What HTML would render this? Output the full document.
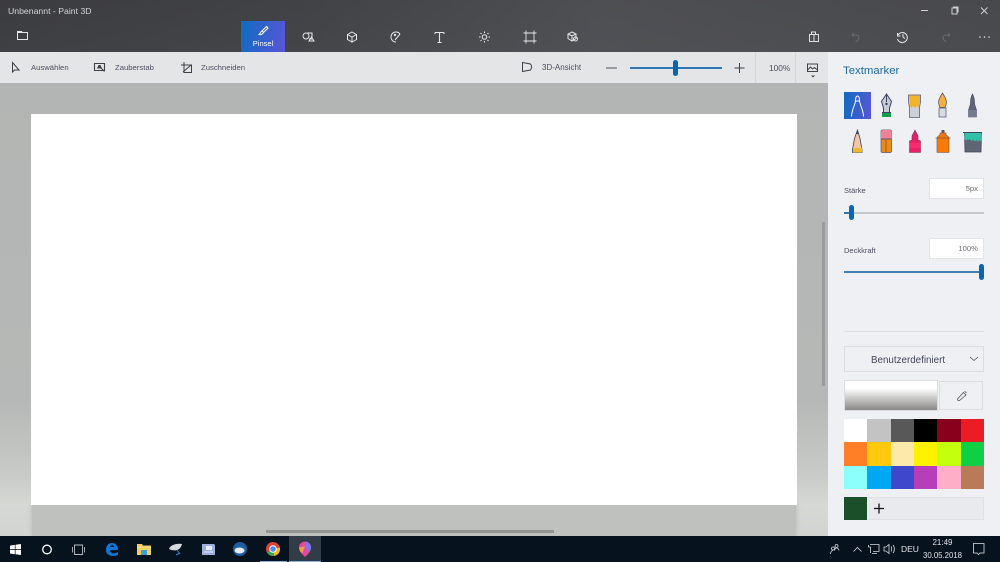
<!DOCTYPE html>
<html><head><meta charset="utf-8">
<style>
html,body{margin:0;padding:0;width:1000px;height:562px;overflow:hidden;background:#b8bab9;font-family:"Liberation Sans","DejaVu Sans",sans-serif}
#w{position:absolute;left:0;top:0;width:1000px;height:562px;overflow:hidden;filter:blur(.3px)}
.a{position:absolute}
svg{position:absolute;overflow:visible}
.t{position:absolute;white-space:nowrap;font-size:7.7px;color:#4c4e62;line-height:10px}
</style></head><body><div id="w">
<div class="a" style="left:0;top:0;width:1000px;height:52px;background:linear-gradient(90deg,#3b3c40 0,#434448 30%,#54555a 60%,#4c4d51 100%)"></div>
<div class="a" style="left:0;top:0;width:1000px;height:52px;background:linear-gradient(180deg,rgba(60,60,62,.25),rgba(70,72,76,.3))"></div>
<div class="t" style="left:8px;top:6px;color:#d4d4d6;font-size:8.7px">Unbenannt - Paint 3D</div>
<svg style="left:0;top:0" width="1000" height="52" fill="none" stroke="#e6e6e8" stroke-width="1">
<path d="M17.500 32.500h10v7h-10z M17.500 32.500v-1h4l1 1"/>
<g transform="translate(308,37)"><circle cx="-2" cy="-1" r="3"/><path d="M-1-4h5v6h-3M1 4l2.500-4 2.500 4z"/></g>
<g transform="translate(352,37)"><path d="M0-5l4.500 2.500v5L0 5l-4.500-2.500v-5zM-4.500-2.500L0 0l4.500-2.500M0 0v5"/></g>
<g transform="translate(396,37)"><path d="M4-3A5 5 0 1 0 0 5M-1 3L4-3" /><circle cx="-1" cy="-2" r=".7"/></g>
<path d="M435 32.500h9M439.500 32.500v10M437.500 42.500h4M435 32.500v1.500M444 32.500v1.500" stroke-width="1.100"/>
<g transform="translate(484.500,37)"><circle r="2.300"/><path d="M0-5.500v1.500M0 4v1.500M-5.500 0h1.500M4 0h1.500M-4-4l1 1M3 3l1 1M-4 4l1-1M3-3l1-1"/></g>
<path d="M526 33h8v8h-8zM526 30.500v13M534 30.500v13M523.500 33h13M523.500 41h13" stroke-width=".9"/>
<g transform="translate(572,37)"><path d="M0-5l4 2v4.500L0 4l-4-2.500V-3zM-4-3l4 2 4-2M0-1v5"/><circle cx="3.500" cy="2" r="2"/></g>
<path d="M809.500 34.500h9v7h-9zM814 34.500v7M811.500 34.500v-2.500h4v2.500" stroke="#dfdfe1"/>
<path d="M853.500 33l-1.500 2 2 1.500M852.500 35h4a3 3 0 0 1 1 5.500l-2 1.500" stroke="#6a6b6f"/>
<path d="M897.500 33v3h3M898 35a5 5 0 1 1-.5 4M903 34v3l2 1.500" stroke="#e6e6e8" />
<path d="M948.500 33l1.500 2-2 1.500M949.500 35h-4a3 3 0 0 0-1 5.500l2 1.500" stroke="#6a6b6f"/>
<path d="M921 10.500h7" stroke="#d0d0d2"/>
<path d="M952 8h5v6h-5zM953.500 8V7h4.500v5h-1" stroke="#d0d0d2"/>
<path d="M981 7.500l6.500 6.500M987.500 7.500L981 14" stroke="#d0d0d2"/>
<g fill="#e0e0e2" stroke="none"><circle cx="980" cy="37" r=".8"/><circle cx="984.500" cy="37" r=".8"/><circle cx="989" cy="37" r=".8"/></g>
</svg>
<div class="a" style="left:241px;top:21px;width:44px;height:31px;background:linear-gradient(100deg,#0f6cc0,#5a55d8)"></div>
<svg style="left:241px;top:21px" width="44" height="31" fill="none" stroke="#fff" stroke-width="1"><path d="M25.500 5.500L21 10l1.500 1.500L27 7zM21 10c-1.500.5-1.500 2.500-3 3.500 2 .5 4-.5 4.500-2"/></svg>
<div class="t" style="left:241px;top:39px;width:44px;text-align:center;color:#fff;font-size:7.500px">Pinsel</div>

<div class="a" style="left:0;top:52px;width:828px;height:31px;background:#e4e5e7"></div>
<div class="a" style="left:0;top:83px;width:828px;height:453px;background:linear-gradient(180deg,#b3b5b4 0,#b6b8b7 70%,#c8cac7 86%,#d6d8d4 93%,#d2d4d1 100%)"></div>
<div class="a" style="left:32px;top:505px;width:764px;height:31px;background:#bfc1bf;box-shadow:0 0 4px 1px #bfc1bf"></div>
<div class="a" style="left:31px;top:114px;width:766px;height:391px;background:#fff"></div>
<div class="a" style="left:822px;top:222px;width:3px;height:164px;background:#9a9c9b"></div>
<div class="a" style="left:266px;top:530px;width:288px;height:3px;background:#939594"></div>
<svg style="left:0;top:52px" width="828" height="31" fill="none" stroke="#404048" stroke-width="1">
<path d="M12.500 10.500v9.500l2-2h4.500z"/>
<path d="M94.500 11.500h10v7h-10z" stroke-width="1.100"/><path d="M97 16.500l1.500-3.500h2l1.500 3.500z" fill="#404048" stroke="none"/><path d="M101 16l3.500 3.500" stroke-width="1.100"/>
<path d="M184 10v10.500h7.500M181 13h10.500v8M183 20l8-7" stroke-width="1"/>
<path d="M522.500 10.500l8 1.500c1.500 2 1.500 4 0 6l-8 1.500z"/>
</svg>
<div class="t" style="left:31px;top:63px">Auswählen</div>
<div class="t" style="left:115px;top:63px">Zauberstab</div>
<div class="t" style="left:201px;top:63px">Zuschneiden</div>
<div class="t" style="left:542px;top:63px;font-size:8px">3D-Ansicht</div>
<div class="a" style="left:606px;top:67px;width:11px;height:1.500px;background:#9a9ba0"></div>
<div class="a" style="left:630px;top:67px;width:92px;height:1.500px;background:#2f76b6"></div>
<div class="a" style="left:673px;top:60px;width:5px;height:16px;border-radius:3px;background:#0a63b4"></div>
<svg style="left:0;top:52px" width="828" height="31" fill="none" stroke="#404048" stroke-width="1">
<path d="M734.500 16h10M739.500 11v10"/>
<path d="M807.500 12h10v7.500h-10zM807.500 18l3-3 2 2 2-1.500 3 2.500"/>
<path d="M811 23.500h4l-2 2z" fill="#404048" stroke="none"/>
</svg>
<div class="a" style="left:755px;top:52px;width:41px;height:31px;box-sizing:border-box;border-left:1px solid #d6d7d9;border-right:1px solid #d6d7d9"></div>
<div class="t" style="left:769px;top:63px;font-size:8.300px">100%</div>

<div class="a" style="left:828px;top:52px;width:172px;height:484px;background:#eff0f3"></div>
<div class="t" style="left:843px;top:65px;font-size:11.400px;line-height:12px;color:#1a6aa8">Textmarker</div>

<div class="a" style="left:844px;top:92px;width:27px;height:27px;background:linear-gradient(100deg,#0f6cc0,#5a55d8)"></div>
<svg style="left:0;top:0" width="1000" height="562" fill="none">
<path d="M857.500 96c-1.500 0-2 1.500-2 5 0 1.500-1 3.500-2.500 8-1 3-1.500 5-1.500 7.500M857.500 96c1.500 0 2 1.500 2 5 0 1.500 1 3.500 2.500 8 1 3 1.500 5 1.500 7.500M855.500 101h4" stroke="#fff" stroke-width="1"/>
<path d="M886.500 94l5 7.500-2 6.500v4.500h-6V108l-2-6.500z" fill="#c8ccd6" stroke="#3c4260" stroke-width="1"/><path d="M886.500 94v8" stroke="#3c4260"/><circle cx="886.500" cy="104" r="1.200" fill="#3c4260"/>
<rect x="882" y="113" width="9" height="4" fill="#12a050"/><path d="M882 112.500h9" stroke="#3c4260"/>
<path d="M908.500 95h12v7l-1 5.500v10h-10v-10l-1-5.500z" fill="#cdd0d8" stroke="#5a5e78" stroke-width=".8"/><path d="M909 95.500h11v7.500l-1 5-2-2-2 2-2-2-2 2-1-2z" fill="#f5b32a"/>
<path d="M942.500 93c2 3 4 6 4 9.500 0 2-1 3.500-1.500 5h-5c-.5-1.500-1.500-3-1.500-5 0-3.500 2-6.500 4-9.500z" fill="#f8ae3a" stroke="#4c5070" stroke-width=".7"/><rect x="939" y="108" width="7" height="9" fill="#d8dae2" stroke="#4c5070" stroke-width=".7"/>
<path d="M972.500 94c1 2 2 5 2 8v2l2 6v7h-8v-7l2-6v-2c0-3 1-6 2-8z" fill="#5f6478" stroke="#3c4260" stroke-width=".6"/><path d="M968.500 110h8v7h-8z" fill="#737b90"/>
<path d="M857.500 130l2.500 8.500 2 11v3h-9.500v-3l2-11z" fill="#f3c6a4" stroke="#3c4260" stroke-width=".8"/><path d="M853 147.500l2 1 2.500-1 2.500 1 2 -1v5h-9z" fill="#f0ba20"/><path d="M857.500 130l1.200 4h-2.400z" fill="#3c4260"/>
<rect x="881" y="130" width="10.500" height="22.500" rx="1.500" fill="#e88a20" stroke="#5a5068" stroke-width=".7"/><path d="M881 139v-7q0-2 2-2h6.500q2 0 2 2v7z" fill="#ef8296"/><path d="M881 139h10.500" stroke="#5a5068"/><rect x="885" y="140" width="2" height="12" fill="#c4780c"/>
<path d="M915 130l3 6v4l2.500 1v11.500h-11V141l2.500-1v-4z" fill="#e8206a" stroke="#6a3a5a" stroke-width=".6"/><path d="M909.500 143h11v5h-11z" fill="#f72c6c"/>
<path d="M940 135v-2h6v2c2 1 3 2 3 3.500v14h-12v-14c0-1.500 1-2.500 3-3.500z" fill="#f77a08" stroke="#6a5050" stroke-width=".6"/><rect x="941.500" y="130" width="3" height="3" fill="#6a5050"/><path d="M935.500 138h15" stroke="#6a5050" stroke-width=".7"/>
<path d="M964.500 133h17l-.5 19h-16z" fill="#5e6672" stroke="#404860" stroke-width=".8"/><path d="M964.500 133h17v7c-1 2-2 1-2.500-.5-1 3-2 2.500-2.500 0-1 1.500-2 3-3 0-1 1-2.500 2-3.500-.5-1 1-1.500 1-2.500.5-1 1-2 1-3-.5z" fill="#33c0a8"/><path d="M963 132.500h19" stroke="#404860"/>
</svg>

<div class="t" style="left:844px;top:186px;font-size:7.500px">Stärke</div>
<div class="a" style="left:929px;top:178px;width:55px;height:21px;box-sizing:border-box;background:#fff;border:1px solid #e2e3e6"></div>
<div class="t" style="left:929px;top:184px;width:49px;text-align:right;color:#707078">5px</div>
<div class="a" style="left:844px;top:212px;width:140px;height:1.500px;background:#c4c6ca"></div>
<div class="a" style="left:844px;top:212px;width:8px;height:1.500px;background:#2f76b6"></div>
<div class="a" style="left:849px;top:205px;width:5px;height:15px;border-radius:3px;background:#0a63b4"></div>
<div class="t" style="left:844px;top:246px;font-size:7.500px">Deckkraft</div>
<div class="a" style="left:929px;top:238px;width:55px;height:21px;box-sizing:border-box;background:#fff;border:1px solid #e2e3e6"></div>
<div class="t" style="left:929px;top:244px;width:49px;text-align:right;color:#707078">100%</div>
<div class="a" style="left:844px;top:271px;width:138px;height:1.500px;background:#3f80b4"></div>
<div class="a" style="left:979px;top:264px;width:5px;height:16px;border-radius:3px;background:#0a63b4"></div>
<div class="a" style="left:844px;top:331px;width:140px;height:1px;background:#dfe0e3"></div>
<div class="a" style="left:844px;top:346px;width:140px;height:26px;box-sizing:border-box;background:#eff0f3;border:1px solid #dcdde0"></div>
<div class="t" style="left:871px;top:356px;font-size:9.800px;color:#44465e">Benutzerdefiniert</div>
<div class="a" style="left:845px;top:381px;width:92px;height:29px;background:linear-gradient(180deg,#fff 0,#fff 25%,#c8c8c6 60%,#8a8886 100%);box-shadow:0 0 0 1px #dcdde0"></div>
<div class="a" style="left:939px;top:381px;width:44px;height:29px;box-sizing:border-box;background:#eff0f3;border:1px solid #dcdde0"></div>
<svg style="left:0;top:0" width="1000" height="562" fill="none" stroke="#505260" stroke-width=".8">
<path d="M970 357l4 3.500 4-3.500"/>
<path d="M964.500 391l2 2M958 400.500l-.5-1.500 6-6.500 2.500 2.500-6.500 5.500z"/>
</svg>
<div class="a" style="left:844px;top:419px;width:140px;height:70px;display:grid;grid-template-columns:repeat(6,23.330px);grid-template-rows:repeat(3,23.330px)">
<i style="background:#fff"></i><i style="background:#c3c3c3"></i><i style="background:#585858"></i><i style="background:#000"></i><i style="background:#88001b"></i><i style="background:#ec1c24"></i>
<i style="background:#ff7f27"></i><i style="background:#ffc90e"></i><i style="background:#fde9a9"></i><i style="background:#fff200"></i><i style="background:#c4ff0e"></i><i style="background:#0ecf45"></i>
<i style="background:#8cfffb"></i><i style="background:#00a8f3"></i><i style="background:#3f48cc"></i><i style="background:#b83dba"></i><i style="background:#ffaec8"></i><i style="background:#b97a57"></i>
</div>
<div class="a" style="left:844px;top:497px;width:140px;height:23px;box-sizing:border-box;background:#e9eaed;border:1px solid #e0e1e4"></div>
<div class="a" style="left:844px;top:497px;width:23px;height:23px;background:#1b4f2a"></div>
<svg style="left:0;top:0" width="1000" height="562" fill="none"><path d="M874 508.500h10M879 503.500v10" stroke="#111" stroke-width="1.300"/></svg>

<div class="a" style="left:0;top:536px;width:1000px;height:26px;background:#06121e"></div>
<div class="a" style="left:289px;top:536px;width:32px;height:26px;background:#313c48"></div>
<div class="a" style="left:260px;top:561px;width:27px;height:1px;background:#7db4e0"></div>
<div class="a" style="left:289px;top:561px;width:32px;height:1px;background:#7db4e0"></div>
<svg style="left:0;top:536px" width="1000" height="26" fill="none">
<path d="M10 13.200v-3.600l4.800-.7v4.300zM15.500 8.800l5.500-.8v5.200h-5.500zM10 14h4.800v4.200l-4.800-.7zM15.500 14H21v5l-5.500-.8z" fill="#fff"/>
<circle cx="47" cy="13.500" r="4.300" stroke="#fff" stroke-width="1.300"/>
<path d="M74.500 9h8v9.500h-8zM72.500 11v5.500M84.500 11v5.500" stroke="#b8bcc0" stroke-width=".9"/>
<path d="M106 14c0-5 3-7 6-7s6 2 6 7h-8c0 4 5 4 8 2v3c-5 2-12 1-12-5zM110 11h4c0-2.500-4-2.500-4 0z" fill="#0a78d8"/>
<path d="M137 8h5l1 1.500h8V19h-14z" fill="#f4cf5e"/><path d="M141 14h6v5h-6z" fill="#3a9fd0"/><path d="M137 11.500h14" stroke="#fbe08a"/>
<path d="M169 13c1-4 8-6 13-5-1 3-2 5-5 6-3 1-6 0-8-1z" fill="#d8dadc"/><path d="M177 14l3 4M176 19l4-2" stroke="#2a80d0"/>
<path d="M202 8h12l1 1v10h-13z" fill="#9bb0dc"/><path d="M206 10h6v4h-6z" fill="#e8eef8"/><path d="M204 16h9" stroke="#e8eef8"/>
<circle cx="240" cy="13" r="7" fill="#1d5f9c"/><ellipse cx="239.500" cy="14.500" rx="5" ry="3" fill="#e8ecf0"/>
<circle cx="273" cy="13" r="7" fill="#dc4437"/><path d="M273 13l-6 3.500a7 7 0 0 0 7.300 3.400z" fill="#31a853"/><path d="M273 13l6.800-1.500a7 7 0 0 1-5.500 8.400z" fill="#fbbc05"/><circle cx="273" cy="13" r="3.300" fill="#4a8ef0" stroke="#fff" stroke-width="1"/>
<path d="M305 21c-3-3-6-6-6-9.500a6 6 0 0 1 12 0c0 3.500-3 6.500-6 9.500z" fill="#e24a9c"/><path d="M305 5.500a6 6 0 0 1 6 6c0 2-1 3.500-2 5l-4-6z" fill="#7a78e8"/><path d="M299 11.500c0 2 1 4 3 6l3-7z" fill="#f0a040"/>
<g stroke="#d8dade" stroke-width=".8">
<circle cx="833" cy="12.500" r="1.500"/><path d="M830.500 18c.2-2 1-3.500 2.500-3.500"/><circle cx="836.500" cy="10" r="1.500"/><path d="M834.500 14.500c.3-1.500 1-2.500 2-2.500s2.300 1 2.500 2.500"/>
<path d="M853.500 15.500l4-4 4 4"/>
<path d="M870 8.500h9v7h-6M872 17.500h5M868.500 9v2h2v6"/>
<path d="M884 11h2l3-2.500v9l-3-2.500h-2zM891 10.500c1 1 1 4 0 5M893 9c1.800 2 1.800 6 0 8"/>
<path d="M973.500 7.500h10.500v9.500h-4l-1.500 1.500-1.500-1.500h-3.500z" stroke="#e0e2e6"/>
</g></svg>
<div class="t" style="left:901px;top:544px;color:#e0e2e6;font-size:8.500px">DEU</div>
<div class="t" style="left:922px;top:538px;width:41px;text-align:center;color:#e0e2e6;font-size:8px">21:49</div>
<div class="t" style="left:922px;top:551px;width:41px;text-align:center;color:#e0e2e6;font-size:7.800px">30.05.2018</div>
</div></body></html>
